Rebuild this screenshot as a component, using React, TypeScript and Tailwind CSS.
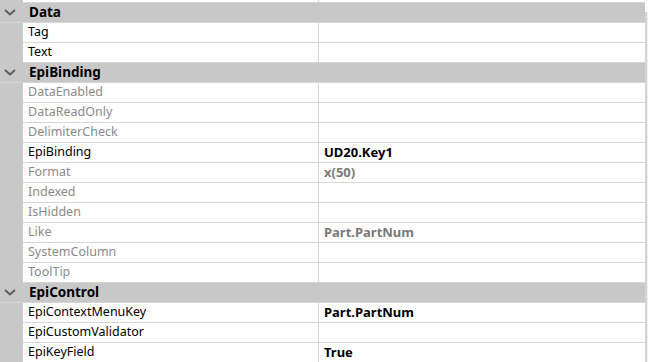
import * as React from 'react';

type Prop = { name: string; value?: string; dim?: boolean; dimValue?: boolean };
type Category = { title: string; props: Prop[] };

const categories: Category[] = [
  { title: 'Data', props: [{ name: 'Tag' }, { name: 'Text' }] },
  {
    title: 'EpiBinding',
    props: [
      { name: 'DataEnabled', dim: true },
      { name: 'DataReadOnly', dim: true },
      { name: 'DelimiterCheck', dim: true },
      { name: 'EpiBinding', value: 'UD20.Key1' },
      { name: 'Format', dim: true, value: 'x(50)', dimValue: true },
      { name: 'Indexed', dim: true },
      { name: 'IsHidden', dim: true },
      { name: 'Like', dim: true, value: 'Part.PartNum', dimValue: true },
      { name: 'SystemColumn', dim: true },
      { name: 'ToolTip', dim: true },
    ],
  },
  {
    title: 'EpiControl',
    props: [
      { name: 'EpiContextMenuKey', value: 'Part.PartNum' },
      { name: 'EpiCustomValidator' },
      { name: 'EpiKeyField', value: 'True' },
    ],
  },
];

function Chevron() {
  return (
    <svg width="12" height="7" viewBox="0 0 12 7" className="ml-[4px]">
      <path d="M1 1l5 4.5L11 1" fill="none" stroke="#5a5a5a" strokeWidth="1.8" />
    </svg>
  );
}

function Row({ p }: { p: Prop }) {
  return (
    <div className="flex h-[20px]">
      <div className="w-[23px] shrink-0 bg-[#c8c8c8]" />
      <div
        className={
          'flex w-[296px] shrink-0 items-center border-b border-r border-[#d6d6d6] pl-[5px] ' +
          (p.dim ? 'text-[#8a8a8a]' : 'text-black')
        }
      >
        {p.name}
      </div>
      <div
        className={
          'flex w-[326px] shrink-0 items-center border-b border-[#d6d6d6] pl-[5px] text-[13px] font-bold ' +
          (p.dimValue ? 'text-[#7a7a7a]' : 'text-black')
        }
      >
        {p.value}
      </div>
    </div>
  );
}

export default function App() {
  return (
    <div
      className="flex h-[362px] w-[648px] overflow-hidden bg-white text-[12.5px] leading-none"
      style={{ fontFamily: '"Segoe UI", "Noto Sans", sans-serif' }}
    >
      <div className="w-[645px] shrink-0">
        <div className="flex h-[3px]">
          <div className="w-[23px] bg-[#c8c8c8]" />
          <div className="w-[296px] border-b border-r border-[#d6d6d6]" />
          <div className="flex-1 border-b border-[#d6d6d6]" />
        </div>
        {categories.map((c) => (
          <React.Fragment key={c.title}>
            <div className="flex h-[20px] items-center border-b border-[#d6d6d6] bg-[#c8c8c8]">
              <div className="flex w-[23px] shrink-0 items-center">
                <Chevron />
              </div>
              <span className="pl-[6px] text-[13.5px] font-bold text-black">{c.title}</span>
            </div>
            {c.props.map((p) => (
              <Row key={p.name} p={p} />
            ))}
          </React.Fragment>
        ))}
      </div>
      <div className="flex flex-1 flex-col">
        <div className="h-[12px]" />
        <div className="flex-1 border-l-2 border-[#d4d4d4] bg-[#f0f0f0]" />
      </div>
    </div>
  );
}
